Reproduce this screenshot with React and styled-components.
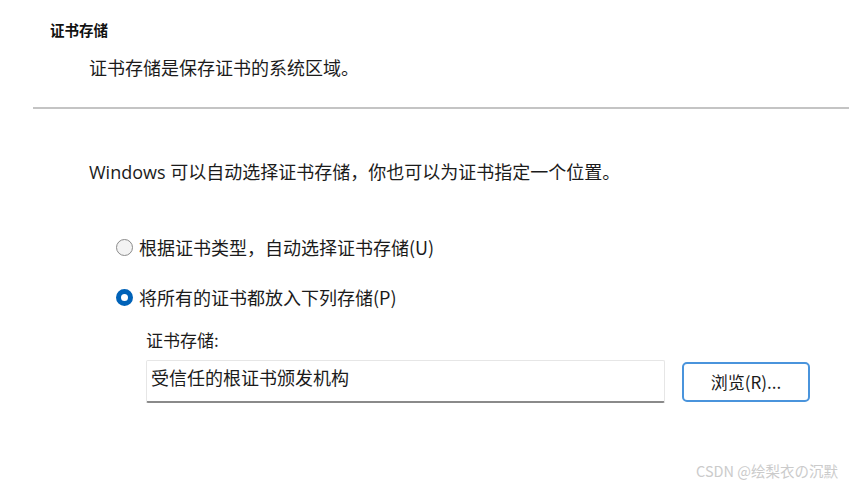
import React, { useState } from "react";
import styled, { createGlobalStyle } from "styled-components";

const GlobalStyle = createGlobalStyle`
  html, body {
    margin: 0;
    padding: 0;
    background: #ffffff;
  }
  body {
    font-family: "Noto Sans CJK SC", "Noto Sans", sans-serif;
    color: #1b1b1b;
  }
`;

const Page = styled.div`
  position: relative;
  width: 849px;
  height: 488px;
  overflow: hidden;
  background: #ffffff;
`;

const Header = styled.div`
  padding: 22px 0 0 50px;
  font-size: 14.5px;
  font-weight: 700;
  line-height: 16px;
  color: #111;
`;

const SubTitle = styled.div`
  margin: 17px 0 0 89px;
  font-size: 18px;
  line-height: 24px;
`;

const Separator = styled.div`
  margin: 28px 0 0 33px;
  height: 2px;
  background: #c4c4c4;
`;

const Body = styled.div`
  padding: 51px 0 0 89px;
`;

const Intro = styled.div`
  font-size: 18px;
  line-height: 24px;
  font-family: "Open Sans", "Noto Sans CJK SC", sans-serif;
`;

const Options = styled.div`
  display: flex;
  flex-direction: column;
  gap: 26px;
  margin: 51px 0 0 27px;
`;

const Option = styled.label`
  display: flex;
  align-items: center;
  gap: 6px;
  font-size: 18px;
  line-height: 24px;
  cursor: pointer;
`;

const RadioDot = styled.span`
  box-sizing: border-box;
  width: 17px;
  height: 17px;
  border-radius: 50%;
  flex-shrink: 0;
  border: ${(p) => (p.$checked ? "5px solid #0062b8" : "1.5px solid #8b8b8b")};
  background: ${(p) => (p.$checked ? "#ffffff" : "#f3f3f3")};
`;

const StoreBlock = styled.div`
  margin: 21px 0 0 57px;
`;

const FieldLabel = styled.div`
  font-size: 17px;
  line-height: 20px;
`;

const FieldRow = styled.div`
  display: flex;
  align-items: center;
  gap: 17px;
  margin-top: 10px;
`;

const StoreInput = styled.div`
  box-sizing: border-box;
  width: 519px;
  height: 43px;
  padding: 4px 4px 0 4px;
  background: #ffffff;
  border: 1px solid #e6e6e6;
  border-bottom: 2px solid #8a8a8a;
  border-radius: 2px;
  font-size: 18px;
  line-height: 24px;
`;

const BrowseButton = styled.button`
  box-sizing: border-box;
  width: 128px;
  height: 40px;
  background: #ffffff;
  border: 2px solid #4a94dc;
  border-radius: 5px;
  font-family: "Noto Sans CJK SC", "Noto Sans", sans-serif;
  font-size: 17px;
  color: #1b1b1b;
  cursor: pointer;
`;

const Watermark = styled.div`
  position: absolute;
  right: 11px;
  bottom: 7px;
  font-size: 14.5px;
  color: #cbcbcb;
`;

export default function App() {
  const [choice, setChoice] = useState("manual");

  return (
    <Page>
      <GlobalStyle />
      <Header>证书存储</Header>
      <SubTitle>证书存储是保存证书的系统区域。</SubTitle>
      <Separator />
      <Body>
        <Intro>Windows 可以自动选择证书存储，你也可以为证书指定一个位置。</Intro>
        <Options>
          <Option onClick={() => setChoice("auto")}>
            <RadioDot $checked={choice === "auto"} />
            根据证书类型，自动选择证书存储(U)
          </Option>
          <Option onClick={() => setChoice("manual")}>
            <RadioDot $checked={choice === "manual"} />
            将所有的证书都放入下列存储(P)
          </Option>
        </Options>
        <StoreBlock>
          <FieldLabel>证书存储:</FieldLabel>
          <FieldRow>
            <StoreInput>受信任的根证书颁发机构</StoreInput>
            <BrowseButton>浏览(R)...</BrowseButton>
          </FieldRow>
        </StoreBlock>
      </Body>
      <Watermark>CSDN @绘梨衣の沉默</Watermark>
    </Page>
  );
}
